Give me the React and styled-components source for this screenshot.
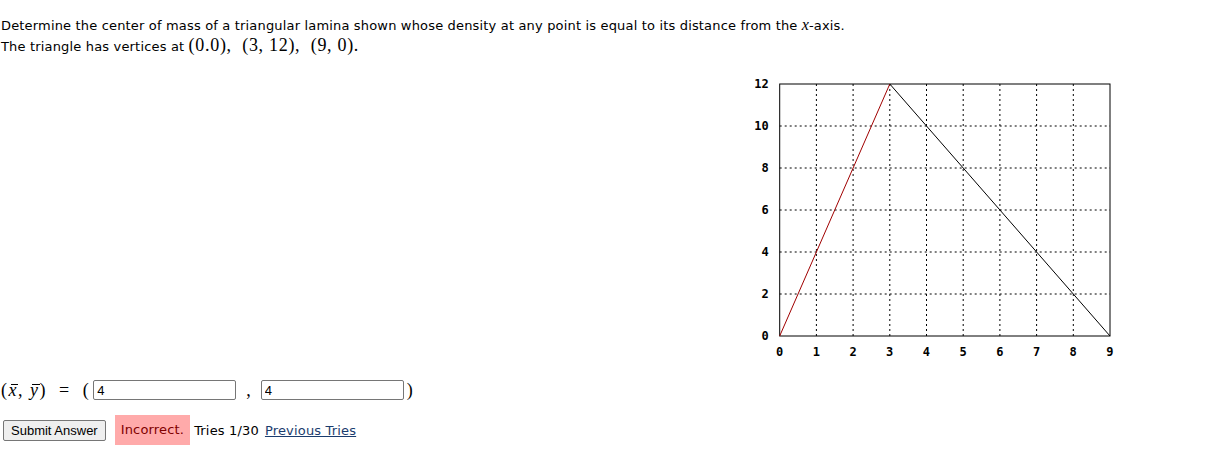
import React from "react";
import styled, { createGlobalStyle } from "styled-components";

const GlobalStyle = createGlobalStyle`
  body {
    margin: 0;
    background: #fff;
    font-family: "DejaVu Sans", Verdana, sans-serif;
    font-size: 13px;
    letter-spacing: 0.17px;
    color: #000;
  }
`;

const Page = styled.div`
  padding: 16px 0 0 1px;
  width: 1224px;
  height: 451px;
  box-sizing: border-box;
`;

const Question = styled.div`
  line-height: 20px;
`;

const MathText = styled.span`
  font-family: "Liberation Serif", "DejaVu Serif", serif;
  font-size: ${(p) => p.size || 18}px;
  font-style: ${(p) => (p.italic ? "italic" : "normal")};
  letter-spacing: ${(p) => p.spacing || 0}px;
  line-height: 1;
  white-space: pre;
`;

const GraphRow = styled.div`
  display: flex;
  margin-top: 16px;
  padding-left: 739px;
`;

const AnswerRow = styled.div`
  display: flex;
  align-items: center;
  height: 22px;
  margin-top: 16px;
`;

const AnswerInput = styled.input`
  width: 143px;
  height: 20px;
  flex-shrink: 0;
  box-sizing: border-box;
  border: 1px solid #767676;
  border-radius: 2px;
  padding: 0 3px;
  font-family: "Liberation Sans", Arial, sans-serif;
  font-size: 13px;
  letter-spacing: 0;
  color: #000;
  margin: 0 ${(p) => p.mr || 0}px 0 ${(p) => p.ml || 0}px;
`;

const Bar = styled.span`
  display: inline-block;
  position: relative;
  font-style: italic;
  &::before {
    content: "";
    position: absolute;
    left: 2px;
    right: 0;
    top: 3px;
    border-top: 1px solid #000;
  }
`;

const SubmitRow = styled.div`
  display: flex;
  align-items: center;
  margin-top: 14px;
  margin-left: 2px;
`;

const SubmitButton = styled.button`
  font-family: "Liberation Sans", Arial, sans-serif;
  font-size: 13px;
  letter-spacing: 0;
  height: 21px;
  padding: 0 7px;
  background: #efefef;
  border: 1px solid #767676;
  border-radius: 2px;
  color: #000;
`;

const Feedback = styled.span`
  background: #ffaaaa;
  color: #800000;
  padding: 7px 6px 8px 6px;
  margin-left: 9px;
  margin-right: 4px;
  line-height: 15px;
`;

const Link = styled.a`
  color: #1a3c6e;
  text-decoration: underline;
  margin-left: 6px;
`;

const xs = [0, 1, 2, 3, 4, 5, 6, 7, 8, 9];
const ys = [0, 2, 4, 6, 8, 10, 12];
const px = (v) => 779.7 + 36.7 * v;
const py = (v) => 335 - 21 * v;

const Graph = () => (
  <svg width="386" height="290" viewBox="740 72 386 290">
    {xs.slice(1, 9).map((v) => (
      <line key={"vx" + v} x1={px(v)} x2={px(v)} y1={py(12)} y2={py(0)} stroke="#000" strokeWidth="1" strokeDasharray="2 3" />
    ))}
    {ys.slice(1, 6).map((v) => (
      <line key={"hy" + v} x1={px(0)} x2={px(9)} y1={py(v)} y2={py(v)} stroke="#000" strokeWidth="1" strokeDasharray="2 3" />
    ))}
    <rect x={px(0)} y={py(12)} width={px(9) - px(0)} height={py(0) - py(12)} fill="none" stroke="#000" strokeWidth="1" />
    <line x1={px(0)} y1={py(0)} x2={px(3)} y2={py(12)} stroke="#a00000" strokeWidth="1" />
    <line x1={px(3)} y1={py(12)} x2={px(9)} y2={py(0)} stroke="#000" strokeWidth="1" />
    {ys.map((v) => (
      <text key={"ty" + v} x={769} y={py(v) + 4} textAnchor="end" fontFamily="'DejaVu Sans Mono', monospace" fontWeight="bold" fontSize="12">
        {v}
      </text>
    ))}
    {xs.map((v) => (
      <text key={"tx" + v} x={px(v)} y={355} textAnchor="middle" fontFamily="'DejaVu Sans Mono', monospace" fontWeight="bold" fontSize="12">
        {v}
      </text>
    ))}
  </svg>
);

export default function App() {
  return (
    <Page>
      <GlobalStyle />
      <Question>
        <div>
          Determine the center of mass of a triangular lamina shown whose density at any point is equal to its distance from the{" "}
          <MathText italic size={16}>x</MathText>-axis.
        </div>
        <div>
          The triangle has vertices at <MathText spacing={0.7}>(0.0),  (3, 12),  (9, 0).</MathText>
        </div>
      </Question>
      <GraphRow>
        <Graph />
      </GraphRow>
      <AnswerRow>
        <MathText spacing={1.5}>
          (<Bar>x</Bar>, <Bar>y</Bar>)  =  (
        </MathText>
        <AnswerInput defaultValue="4" ml={3} mr={10} />
        <MathText>,</MathText>
        <AnswerInput defaultValue="4" ml={10} mr={3} />
        <MathText>)</MathText>
      </AnswerRow>
      <SubmitRow>
        <SubmitButton>Submit Answer</SubmitButton>
        <Feedback>Incorrect.</Feedback>
        Tries 1/30<Link href="#">Previous Tries</Link>
      </SubmitRow>
    </Page>
  );
}
